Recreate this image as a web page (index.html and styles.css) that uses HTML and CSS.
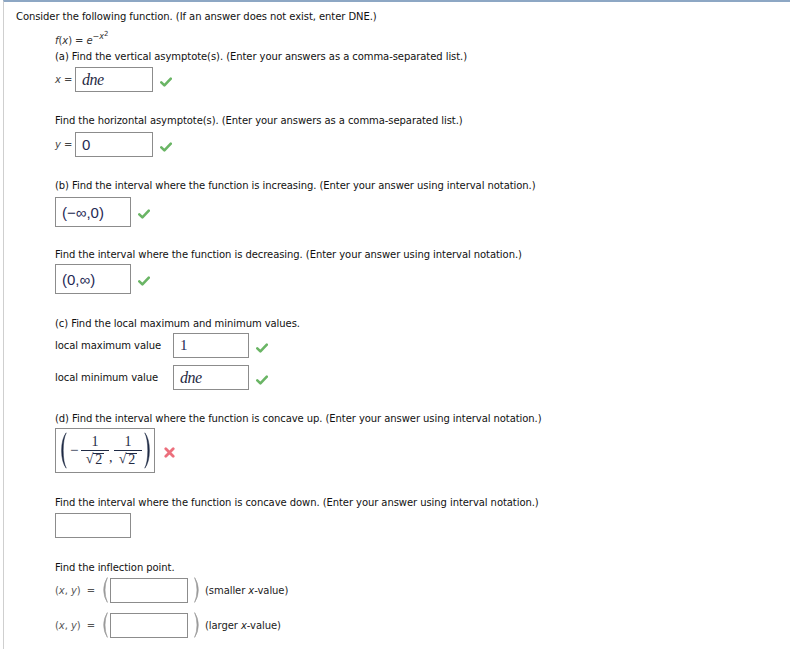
FILE: index.html
```html
<!DOCTYPE html>
<html>
<head>
<meta charset="utf-8">
<link rel="stylesheet" href="styles.css">
</head>
<body>
<div class="page">
  <div class="txt intro">Consider the following function. (If an answer does not exist, enter DNE.)</div>
  <div class="indent">
    <div class="txt fx"><span class="it">f</span>(<span class="it">x</span>) = <span class="it">e</span><sup>&minus;<span class="it">x</span><sup class="sq">2</sup></sup></div>
    <div class="txt m2">(a) Find the vertical asymptote(s). (Enter your answers as a comma-separated list.)</div>
    <div class="row m3">
      <span class="lbl"><span class="it">x</span> =</span>
      <span class="box w77"><span class="val-it">dne</span></span>
      <svg class="chk" viewBox="0 0 12 10"><path d="M1.3 5.4 L4.4 8.4 L10.8 1.6" fill="none" stroke="#6ab565" stroke-width="2.6" stroke-linecap="round" stroke-linejoin="round"/></svg>
    </div>
    <div class="txt m22">Find the horizontal asymptote(s). (Enter your answers as a comma-separated list.)</div>
    <div class="row m4">
      <span class="lbl"><span class="it">y</span> =</span>
      <span class="box w77"><span class="val">0</span></span>
      <svg class="chk" viewBox="0 0 12 10"><path d="M1.3 5.4 L4.4 8.4 L10.8 1.6" fill="none" stroke="#6ab565" stroke-width="2.6" stroke-linecap="round" stroke-linejoin="round"/></svg>
    </div>
    <div class="txt m22">(b) Find the interval where the function is increasing. (Enter your answer using interval notation.)</div>
    <div class="row m4">
      <span class="box w75 tall"><span class="val">(&minus;&infin;,0)</span></span>
      <svg class="chk" viewBox="0 0 12 10"><path d="M1.3 5.4 L4.4 8.4 L10.8 1.6" fill="none" stroke="#6ab565" stroke-width="2.6" stroke-linecap="round" stroke-linejoin="round"/></svg>
    </div>
    <div class="txt m21">Find the interval where the function is decreasing. (Enter your answer using interval notation.)</div>
    <div class="row m2">
      <span class="box w75 tall"><span class="val">(0,&infin;)</span></span>
      <svg class="chk" viewBox="0 0 12 10"><path d="M1.3 5.4 L4.4 8.4 L10.8 1.6" fill="none" stroke="#6ab565" stroke-width="2.6" stroke-linecap="round" stroke-linejoin="round"/></svg>
    </div>
    <div class="txt m23">(c) Find the local maximum and minimum values.</div>
    <div class="row m2">
      <span class="lbl2">local maximum value</span>
      <span class="box w75"><span class="val serif">1</span></span>
      <svg class="chk" viewBox="0 0 12 10"><path d="M1.3 5.4 L4.4 8.4 L10.8 1.6" fill="none" stroke="#6ab565" stroke-width="2.6" stroke-linecap="round" stroke-linejoin="round"/></svg>
    </div>
    <div class="row m7">
      <span class="lbl2">local minimum value</span>
      <span class="box w75"><span class="val-it">dne</span></span>
      <svg class="chk" viewBox="0 0 12 10"><path d="M1.3 5.4 L4.4 8.4 L10.8 1.6" fill="none" stroke="#6ab565" stroke-width="2.6" stroke-linecap="round" stroke-linejoin="round"/></svg>
    </div>
    <div class="txt m22">(d) Find the interval where the function is concave up. (Enter your answer using interval notation.)</div>
    <div class="row m2">
      <span class="box w99 big">
        <span class="math">
          <svg class="bp" viewBox="0 0 6 37"><path d="M5.2 0.8 Q0.6 7 0.6 18.5 Q0.6 30 5.2 36.2 Q2.2 30 2.2 18.5 Q2.2 7 5.2 0.8 Z" fill="#1f2a44" stroke="#1f2a44" stroke-width="0.5"/></svg>
          <span class="mo">&minus;</span>
          <span class="frac"><span class="num">1</span><span class="den"><span class="rad">&radic;</span><span class="rc">2</span></span></span>
          <span class="comma">,</span>
          <span class="frac"><span class="num">1</span><span class="den"><span class="rad">&radic;</span><span class="rc">2</span></span></span>
          <svg class="bp bpr" viewBox="0 0 6 37"><path d="M0.8 0.8 Q5.4 7 5.4 18.5 Q5.4 30 0.8 36.2 Q3.8 30 3.8 18.5 Q3.8 7 0.8 0.8 Z" fill="#1f2a44" stroke="#1f2a44" stroke-width="0.5"/></svg>
        </span>
      </span>
      <svg class="crs" viewBox="0 0 11 11"><path d="M1.8 1.8 L9.2 9.2 M9.2 1.8 L1.8 9.2" fill="none" stroke="#ec6f7c" stroke-width="2.8" stroke-linecap="round"/></svg>
    </div>
    <div class="txt m23">Find the interval where the function is concave down. (Enter your answer using interval notation.)</div>
    <div class="row m3">
      <span class="box w75"></span>
    </div>
    <div class="txt m23">Find the inflection point.</div>
    <div class="row m2">
      <span class="lbl3">(<span class="it">x</span>, <span class="it">y</span>)&nbsp; =</span>
      <svg class="pp" viewBox="0 0 5 26"><path d="M4.4 0.6 Q0.7 6 0.7 13 Q0.7 20 4.4 25.4 Q2 20 2 13 Q2 6 4.4 0.6 Z" fill="#9a9a9a" stroke="#9a9a9a" stroke-width="0.6"/></svg>
      <span class="box w77 ib"></span>
      <svg class="pp ppr" viewBox="0 0 5 26"><path d="M0.6 0.6 Q4.3 6 4.3 13 Q4.3 20 0.6 25.4 Q3 20 3 13 Q3 6 0.6 0.6 Z" fill="#9a9a9a" stroke="#9a9a9a" stroke-width="0.6"/></svg>
      <span class="note">(smaller <span class="it">x</span>-value)</span>
    </div>
    <div class="row m9">
      <span class="lbl3">(<span class="it">x</span>, <span class="it">y</span>)&nbsp; =</span>
      <svg class="pp" viewBox="0 0 5 26"><path d="M4.4 0.6 Q0.7 6 0.7 13 Q0.7 20 4.4 25.4 Q2 20 2 13 Q2 6 4.4 0.6 Z" fill="#9a9a9a" stroke="#9a9a9a" stroke-width="0.6"/></svg>
      <span class="box w77 ib"></span>
      <svg class="pp ppr" viewBox="0 0 5 26"><path d="M0.6 0.6 Q4.3 6 4.3 13 Q4.3 20 0.6 25.4 Q3 20 3 13 Q3 6 0.6 0.6 Z" fill="#9a9a9a" stroke="#9a9a9a" stroke-width="0.6"/></svg>
      <span class="note">(larger <span class="it">x</span>-value)</span>
    </div>
  </div>
</div>
</body>
</html>
```

FILE: styles.css
```css
html, body {
  margin: 0;
  padding: 0;
  background: #fff;
}
body {
  font-family: "DejaVu Sans", Verdana, sans-serif;
  font-size: 10px;
  letter-spacing: -0.07px;
  color: #111;
}
.page {
  margin-left: 3px;
  border-left: 1px solid #cfcfcf;
  border-top: 2px solid #8da7c4;
  padding: 8px 0 0 12px;
  height: 649px;
  box-sizing: border-box;
}
.txt {
  height: 14px;
  line-height: 14px;
  white-space: nowrap;
}
.indent {
  padding-left: 39px;
}
.it { font-style: italic; }
.fx {
  margin-top: 10px;
  color: #333;
}
.fx sup {
  font-size: 8px;
  vertical-align: 5px;
  line-height: 0;
}
.fx sup .sq {
  font-size: 7px;
  vertical-align: 3px;
}
.m2 { margin-top: 2px; }
.m3 { margin-top: 3px; }
.m4 { margin-top: 4px; }
.m7 { margin-top: 7px; }
.m9 { margin-top: 9px; }
.m21 { margin-top: 21px; }
.m22 { margin-top: 22px; }
.m23 { margin-top: 23px; }

.row {
  display: flex;
  align-items: center;
  white-space: nowrap;
}
.lbl {
  width: 20px;
  color: #444;
}
.lbl2 {
  width: 118px;
}
.lbl3 {
  width: 48px;
  color: #555;
}
.box {
  display: flex;
  align-items: center;
  border: 1px solid #8c8c8c;
  height: 25px;
  box-sizing: border-box;
  padding-left: 6px;
  background: #fff;
}
.w77 { width: 78px; }
.w75 { width: 76px; }
.w99 { width: 100px; padding-left: 5px; }
.tall { height: 30px; }
.big { height: 45px; }
.ib { margin-left: 2px; }

.val-it {
  font-family: "Liberation Serif", serif;
  font-style: italic;
  font-size: 16px;
  color: #1f2a44;
  letter-spacing: -0.5px;
}
.val {
  font-family: "Liberation Sans", sans-serif;
  font-size: 15px;
  color: #1f2a55;
  letter-spacing: 0;
}
.val.serif {
  font-family: "Liberation Serif", serif;
}
.chk {
  width: 12px;
  height: 10px;
  margin-left: 7px;
  margin-top: 4px;
}
.crs {
  width: 11px;
  height: 11px;
  margin-left: 9px;
  margin-top: 4px;
}
.math {
  display: flex;
  align-items: center;
  font-family: "Liberation Serif", serif;
  color: #1f2a44;
  letter-spacing: 0;
}
.bp {
  width: 6px;
  height: 37px;
  flex: none;
}
.bpr { margin-left: 2px; }
.mo {
  font-size: 15px;
  width: 11px;
  margin-left: 3px;
  text-align: left;
}
.frac {
  display: inline-flex;
  flex-direction: column;
  align-items: center;
  font-size: 14px;
  line-height: 14px;
  width: 28px;
}
.num {
  border-bottom: 1px solid #1f2a44;
  width: 100%;
  text-align: center;
  padding-bottom: 1px;
}
.den {
  display: flex;
  align-items: flex-end;
  margin-top: 1px;
}
.rad { font-size: 14px; line-height: 14px; }
.rc { border-top: 1px solid #1f2a44; line-height: 12px; padding: 0 2px; }
.comma {
  font-size: 14px;
  width: 5px;
  margin-top: 14px;
}
.pp {
  width: 5px;
  height: 26px;
  flex: none;
}
.ppr { margin-left: 6px; }
.note {
  margin-left: 6px;
  color: #222;
}
```
